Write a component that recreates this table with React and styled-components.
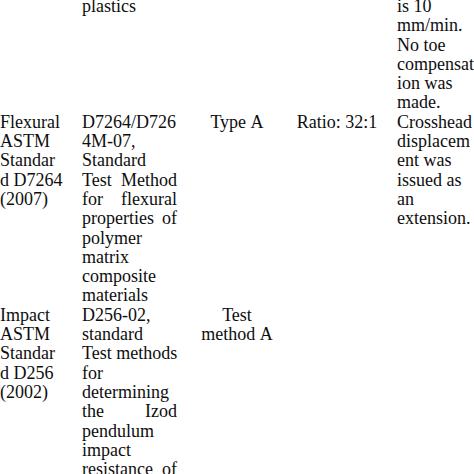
import React from 'react';
import styled, { createGlobalStyle } from 'styled-components';

const GlobalStyle = createGlobalStyle`
  html, body {
    margin: 0;
    padding: 0;
    background: #ffffff;
    overflow: hidden;
  }
`;

const Page = styled.div`
  width: 474px;
  height: 474px;
  overflow: hidden;
  background: #ffffff;
`;

const Table = styled.div`
  display: flex;
  flex-direction: column;
  margin-top: -3px;
  font-family: "Liberation Serif", "Times New Roman", serif;
  font-size: 18px;
  line-height: 19.3px;
  color: #0e0e0e;
`;

const Row = styled.div`
  display: grid;
  grid-template-columns: 62px 95px 80px 80px 80px;
  column-gap: 20px;
  align-items: start;
`;

const Cell = styled.div`
  display: flex;
  flex-direction: column;
  align-items: ${(p) => (p.$align === 'center' ? 'center' : 'stretch')};
  white-space: nowrap;
`;

const Line = styled.span`
  display: flex;
  height: 19.3px;
  justify-content: ${(p) => (p.$justify ? 'space-between' : 'flex-start')};
  gap: 4.5px;
`;

const rows = [
  {
    cols: [
      [],
      [['plastics']],
      [],
      [],
      [['is 10'], ['mm/min.'], ['No toe'], ['compensat'], ['ion was'], ['made.']],
    ],
  },
  {
    cols: [
      [['Flexural'], ['ASTM'], ['Standar'], ['d D7264'], ['(2007)']],
      [
        ['D7264/D726'],
        ['4M-07,'],
        ['Standard'],
        ['Test Method', true],
        ['for flexural', true],
        ['properties of', true],
        ['polymer'],
        ['matrix'],
        ['composite'],
        ['materials'],
      ],
      [['Type A']],
      [['Ratio: 32:1']],
      [['Crosshead'], ['displacem'], ['ent was'], ['issued as'], ['an'], ['extension.']],
    ],
  },
  {
    cols: [
      [['Impact'], ['ASTM'], ['Standar'], ['d D256'], ['(2002)']],
      [
        ['D256-02,'],
        ['standard'],
        ['Test methods', true],
        ['for'],
        ['determining'],
        ['the Izod', true],
        ['pendulum'],
        ['impact'],
        ['resistance of', true],
        ['notched'],
      ],
      [['Test'], ['method A']],
      [],
      [],
    ],
  },
];

const aligns = ['left', 'left', 'center', 'center', 'left'];

const App = () => {
  return (
    <Page>
      <GlobalStyle />
      <Table>
        {rows.map((row, i) => (
          <Row key={i}>
            {row.cols.map((lines, j) => (
              <Cell key={j} $align={aligns[j]}>
                {lines.map(([text, justify], k) => (
                  <Line key={k} $justify={justify}>
                    {text.split(' ').map((word, w) => (
                      <span key={w}>{word}</span>
                    ))}
                  </Line>
                ))}
              </Cell>
            ))}
          </Row>
        ))}
      </Table>
    </Page>
  );
};

export default App;
